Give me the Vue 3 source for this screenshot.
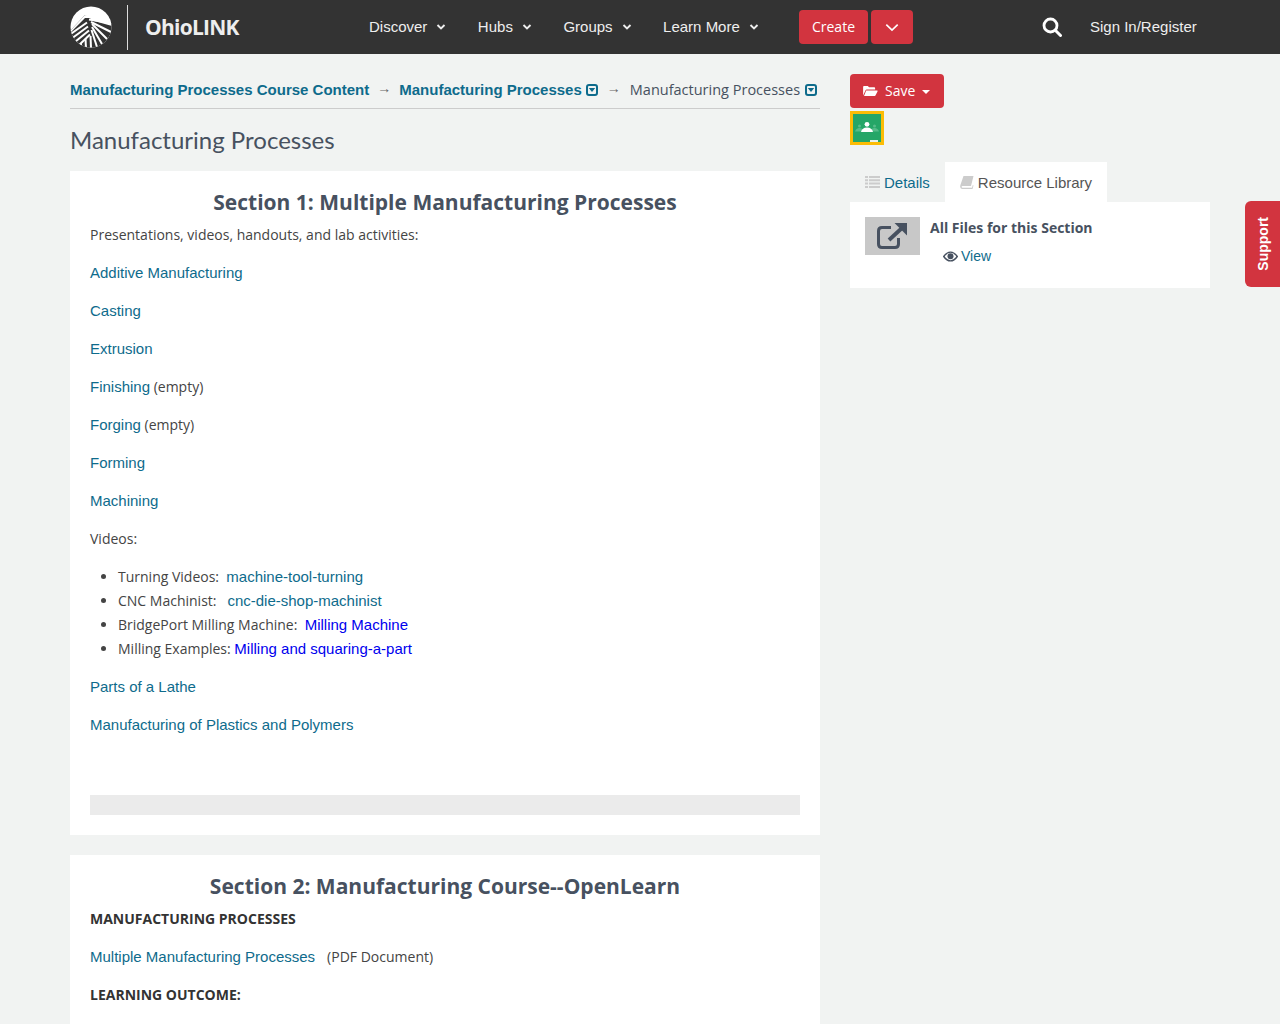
<script setup>
const nav = ['Discover', 'Hubs', 'Groups', 'Learn More']
const stripes = [
  'M0 28.5 L17 16.5', 'M1 33 L18 20.5', 'M3 37.5 L19 24.5', 'M7 41 L20 28.5',
  'M19 13.5 L43 17.5', 'M21 16 L41 26', 'M22 18 L37 33', 'M22 21 L32 38', 'M21.5 24 L27 41',
  'M20.5 30 L21 42', 'M15.5 33 L16 42', 'M11 37 L11 42'
]
</script>

<template>
  <div class="page">
    <header class="topbar">
      <a class="brand">
        <svg class="globe" viewBox="0 0 42 42">
          <defs><clipPath id="globe-clip"><circle cx="21" cy="21" r="20.5" /></clipPath></defs>
          <circle cx="21" cy="21" r="20.5" fill="#fff" />
          <g clip-path="url(#globe-clip)">
            <path d="M15 9 L0 25 V42 H42 V20 L24 15 Z" fill="#333" />
            <path d="M15 9 L0 25 L0 27 L15 12 L20 12 L42 16 L42 13 L22 11 Z" fill="#fff" />
            <path v-for="s in stripes" :key="s" :d="s" stroke="#fff" stroke-width="2" fill="none" />
          </g>
        </svg>
        <span class="brand-rule"></span>
        <span class="brand-name">OhioLINK</span>
      </a>
      <nav class="main-nav">
        <a v-for="n in nav" :key="n" class="nav-item">
          {{ n }}
          <svg class="nav-chev" viewBox="0 0 10 8"><path d="M1.5 2 L5 5.5 L8.5 2" fill="none" stroke="#eee" stroke-width="1.9" /></svg>
        </a>
      </nav>
      <div class="create-group">
        <button class="create">Create</button>
        <button class="create-caret">
          <svg viewBox="0 0 16 10" width="14" height="9"><path d="M1.5 1.8 L8 8 L14.5 1.8" fill="none" stroke="#fff" stroke-width="1.9" /></svg>
        </button>
      </div>
      <svg class="search" viewBox="0 0 20 20">
        <circle cx="8.5" cy="8.5" r="6.5" fill="none" stroke="#fff" stroke-width="2.8" />
        <path d="M13.3 13.3 L18.5 18.5" stroke="#fff" stroke-width="3" stroke-linecap="round" />
      </svg>
      <a class="signin">Sign In/Register</a>
    </header>

    <div class="layout">
      <main class="main-col">
        <div class="crumbs">
          <a class="crumb-strong">Manufacturing Processes Course Content</a>
          <span class="arrow">→</span>
          <a class="crumb-strong">Manufacturing Processes</a>
          <svg class="drop" viewBox="0 0 12 12"><rect x="1" y="1" width="10" height="10" rx="2" fill="none" stroke="#0e6b8c" stroke-width="2" /><path d="M2.8 4 H9.2 L6 8 Z" fill="#0e6b8c" /></svg>
          <span class="arrow arrow-2">→</span>
          <span class="crumb-plain">Manufacturing Processes</span>
          <svg class="drop drop-2" viewBox="0 0 12 12"><rect x="1" y="1" width="10" height="10" rx="2" fill="none" stroke="#0e6b8c" stroke-width="2" /><path d="M2.8 4 H9.2 L6 8 Z" fill="#0e6b8c" /></svg>
        </div>
        <h1 class="page-title">Manufacturing Processes</h1>

        <section class="card">
          <h2>Section 1: Multiple Manufacturing Processes</h2>
          <p class="first">Presentations, videos, handouts, and lab activities:</p>
          <p><a>Additive Manufacturing</a></p>
          <p><a>Casting</a></p>
          <p><a>Extrusion</a></p>
          <p><a>Finishing</a> <span>(empty)</span></p>
          <p><a>Forging</a> <span>(empty)</span></p>
          <p><a>Forming</a></p>
          <p><a>Machining</a></p>
          <p>Videos:</p>
          <ul>
            <li>Turning Videos:&nbsp; <a>machine-tool-turning</a></li>
            <li>CNC Machinist: &nbsp; <a>cnc-die-shop-machinist</a></li>
            <li>BridgePort Milling Machine:&nbsp; <a class="blue">Milling Machine</a></li>
            <li>Milling Examples: <a class="blue">Milling and squaring-a-part</a></li>
          </ul>
          <p><a>Parts of a Lathe</a></p>
          <p><a>Manufacturing of Plastics and Polymers</a></p>
          <div class="grey-bar"></div>
        </section>

        <section class="card card-2">
          <h2>Section 2: Manufacturing Course--OpenLearn</h2>
          <p class="first"><strong>MANUFACTURING PROCESSES</strong></p>
          <p><a>Multiple Manufacturing Processes</a><span class="doc-type">(PDF Document)</span></p>
          <p><strong>LEARNING OUTCOME:</strong></p>
        </section>
      </main>

      <aside class="side-col">
        <button class="save">
          <svg viewBox="0 0 16 13" width="15" height="12"><path d="M0 11.5 V2 Q0 1 1 1 H5 L6.5 2.5 H12 Q13 2.5 13 3.5 V5 H4 Q3 5 2.5 6 Z M3.3 6 H15.2 Q16 6 15.6 7 L13.5 11 Q13 12 12 12 H1 Z" fill="#fff" /></svg>
          <span>Save</span>
          <i class="caret"></i>
        </button>
        <div class="classroom">
          <svg viewBox="0 0 28 28" width="28" height="28">
            <rect width="28" height="28" fill="#25a667" />
            <circle cx="6.5" cy="12" r="1.5" fill="#57bb8a" />
            <circle cx="21.5" cy="12" r="1.5" fill="#57bb8a" />
            <path d="M2 17.5 Q3 14 6.5 14 Q10 14 11 17.5 Z M17 17.5 Q18 14 21.5 14 Q25 14 26 17.5 Z" fill="#57bb8a" />
            <circle cx="14" cy="10.3" r="2.4" fill="#fff" />
            <path d="M8 18 Q9 13.5 14 13.5 Q19 13.5 20 18 Z" fill="#fff" />
            <rect x="17" y="26" width="8" height="2" fill="#e8f0ea" />
          </svg>
        </div>
        <div class="tabs">
          <a class="tab">
            <svg viewBox="0 0 15 12" width="15" height="12" fill="#ccc"><path d="M0 0h3v2H0zM4 0h11v2H4zM0 3.3h3v2H0zM4 3.3h11v2H4zM0 6.6h3v2H0zM4 6.6h11v2H4zM0 10h3v2H0zM4 10h11v2H4z" /></svg>
            <span>Details</span>
          </a>
          <a class="tab tab-active">
            <svg viewBox="0 0 14 13" width="14" height="13"><path d="M3.5 0 H13.5 L11 10 H2.5 Q1.5 10 1.6 11 Q1.8 11.8 2.5 11.8 H12 L12.8 9 L13.5 9.5 L12.5 13 H2.3 Q0.5 13 0.2 11 Q0 10.5 0.4 9 Z" fill="#ccc" /></svg>
            <span>Resource Library</span>
          </a>
        </div>
        <div class="panel">
          <div class="thumb">
            <svg class="ext-icon" viewBox="0 0 30 26" width="30" height="26">
              <path d="M14 4.5 H5 Q1.5 4.5 1.5 8 V21 Q1.5 24.5 5 24.5 H18 Q21.5 24.5 21.5 21 V15" fill="none" stroke="#475160" stroke-width="3" />
              <path d="M12 17 L25 5" stroke="#475160" stroke-width="3.8" />
              <path d="M17.5 0 H30 V12.5 Z" fill="#475160" />
            </svg>
          </div>
          <div class="panel-body">
            <div class="panel-title">All Files for this Section</div>
            <a class="view">
              <svg viewBox="0 0 16 11" width="15" height="11"><path d="M0.8 5.5 Q4 0.8 8 0.8 Q12 0.8 15.2 5.5 Q12 10.2 8 10.2 Q4 10.2 0.8 5.5 Z" fill="none" stroke="#475160" stroke-width="1.5" /><circle cx="8" cy="5.3" r="3.2" fill="#475160" /></svg>
              <span>View</span>
            </a>
          </div>
        </div>
      </aside>
    </div>

    <div class="support">Support</div>
  </div>
</template>

<style>
html, body { margin: 0; background: #f1f3f2; }
</style>

<style scoped>
.page {
  position: relative;
  height: 1024px;
  overflow: hidden;
  background: #f1f3f2;
  font-family: "Open Sans", sans-serif;
  font-size: 14px;
  color: #444;
}
.topbar {
  height: 54px;
  background: #333;
  display: flex;
  align-items: center;
  padding-left: 70px;
  box-sizing: border-box;
}
.brand { display: flex; align-items: center; width: 299px; flex: none; }
.globe { width: 42px; height: 42px; flex: none; }
.brand-rule { width: 1px; height: 45px; background: #ddd; margin: 0 17px 0 15px; }
.brand-name {
  font-family: "Open Sans", sans-serif;
  font-weight: 700;
  font-size: 21px;
  letter-spacing: -0.75px;
  color: #eee;
}
.main-nav { display: flex; width: 430px; flex: none; padding-bottom: 2px; }
.nav-item {
  display: flex;
  align-items: center;
  color: #eee;
  font-family: "Liberation Sans", sans-serif;
  font-size: 15px;
  margin-right: 31.5px;
}
.nav-chev { width: 10px; height: 8px; margin-left: 9px; margin-top: 2px; }
.create-group { display: flex; gap: 3px; flex: none; }
.create, .create-caret {
  height: 34px;
  border: 0;
  border-radius: 4px;
  background: #d2343f;
  color: #fff;
  font-family: "Open Sans", sans-serif;
  font-size: 14px;
  padding: 0 0 2px;
}
.create { width: 69px; }
.create-caret { width: 42px; display: flex; align-items: center; justify-content: center; padding: 0; }
.search { width: 20px; height: 20px; margin-left: 129px; flex: none; }
.signin {
  color: #eee;
  font-family: "Liberation Sans", sans-serif;
  font-size: 15px;
  margin-left: 28px;
  padding-bottom: 2px;
}
.layout { display: flex; padding: 20px 0 0 70px; gap: 30px; }
.main-col { width: 750px; flex: none; }
.crumbs {
  height: 35px;
  box-sizing: border-box;
  border-bottom: 1px solid #ccc;
  display: flex;
  align-items: center;
  padding-bottom: 3px;
  white-space: nowrap;
}
.crumb-strong {
  font-family: "Liberation Sans", sans-serif;
  font-weight: 700;
  font-size: 15px;
  color: #0e6b8c;
}
.crumb-plain { color: #475160; font-size: 14.5px; }
.arrow {
  color: #666;
  font-size: 14px;
  margin: 0 8px 4px;
  font-family: "Liberation Sans", sans-serif;
}
.arrow-2 { margin: 0 9px 4px 9px; }
.drop { width: 12px; height: 12px; margin-left: 4px; flex: none; }
.drop-2 { margin-left: 5px; }
.page-title {
  margin: 16px 0 16px;
  font-family: "Lato", sans-serif;
  font-size: 24px;
  line-height: 30px;
  font-weight: 400;
  color: #475160;
}
.card {
  background: #fff;
  padding: 19px 20px 20px;
}
.card-2 { margin-top: 20px; padding-bottom: 40px; }
h2 {
  margin: 0;
  text-align: center;
  font-size: 21px;
  line-height: 24px;
  font-weight: 700;
  color: #475160;
}
p { margin: 0 0 14px; line-height: 24px; }
p.first { margin-top: 9px; }
strong { color: #333; }
a { color: #0e6b8c; font-family: "Liberation Sans", sans-serif; font-size: 15px; }
a.blue { color: #0000ee; }
.doc-type { margin-left: 12px; }
ul { margin: 0 0 14px; padding-left: 28px; }
li { line-height: 24px; }
.grey-bar { height: 20px; background: #ebebeb; margin-top: 58px; }
.side-col { width: 360px; flex: none; }
.save {
  display: flex;
  align-items: center;
  width: 94px;
  height: 34px;
  padding: 0 0 0 13px;
  box-sizing: border-box;
  border: 0;
  border-radius: 4px;
  background: #d2343f;
  color: #fff;
  font-family: "Open Sans", sans-serif;
  font-size: 14px;
}
.save span { margin-left: 7px; padding-bottom: 2px; }
.caret {
  width: 0;
  height: 0;
  margin-left: 7px;
  margin-top: 2px;
  border-left: 4.5px solid transparent;
  border-right: 4.5px solid transparent;
  border-top: 4.5px solid #fff;
}
.classroom {
  width: 28px;
  height: 28px;
  margin-top: 3px;
  border: 3px solid #fcbc05;
  font-size: 0;
}
.tabs { display: flex; margin-top: 17px; }
.tab {
  display: flex;
  align-items: center;
  gap: 4px;
  height: 40px;
  padding: 0 15px;
  box-sizing: border-box;
}
.tab-active { background: #fff; color: #555; }
.panel {
  display: flex;
  background: #fff;
  height: 86px;
  padding: 15px;
  box-sizing: border-box;
}
.thumb {
  width: 55px;
  height: 38px;
  background: #c8c8c8;
  display: flex;
  align-items: center;
  justify-content: center;
  flex: none;
}
.ext-icon { margin-right: 2px; }
.panel-body { margin-left: 10px; }
.panel-title { font-size: 14px; font-weight: 700; color: #475160; line-height: 22px; }
.view { display: flex; align-items: center; gap: 3px; margin: 7px 0 0 13px; font-size: 14px; line-height: 20px; }
.support {
  position: absolute;
  top: 201px;
  right: 0;
  width: 35px;
  height: 86px;
  background: #d2343f;
  border-radius: 6px 0 0 6px;
  color: #fff;
  font-family: "Liberation Sans", sans-serif;
  font-weight: 700;
  font-size: 14px;
  display: flex;
  align-items: center;
  justify-content: center;
  writing-mode: sideways-lr;
}
</style>
